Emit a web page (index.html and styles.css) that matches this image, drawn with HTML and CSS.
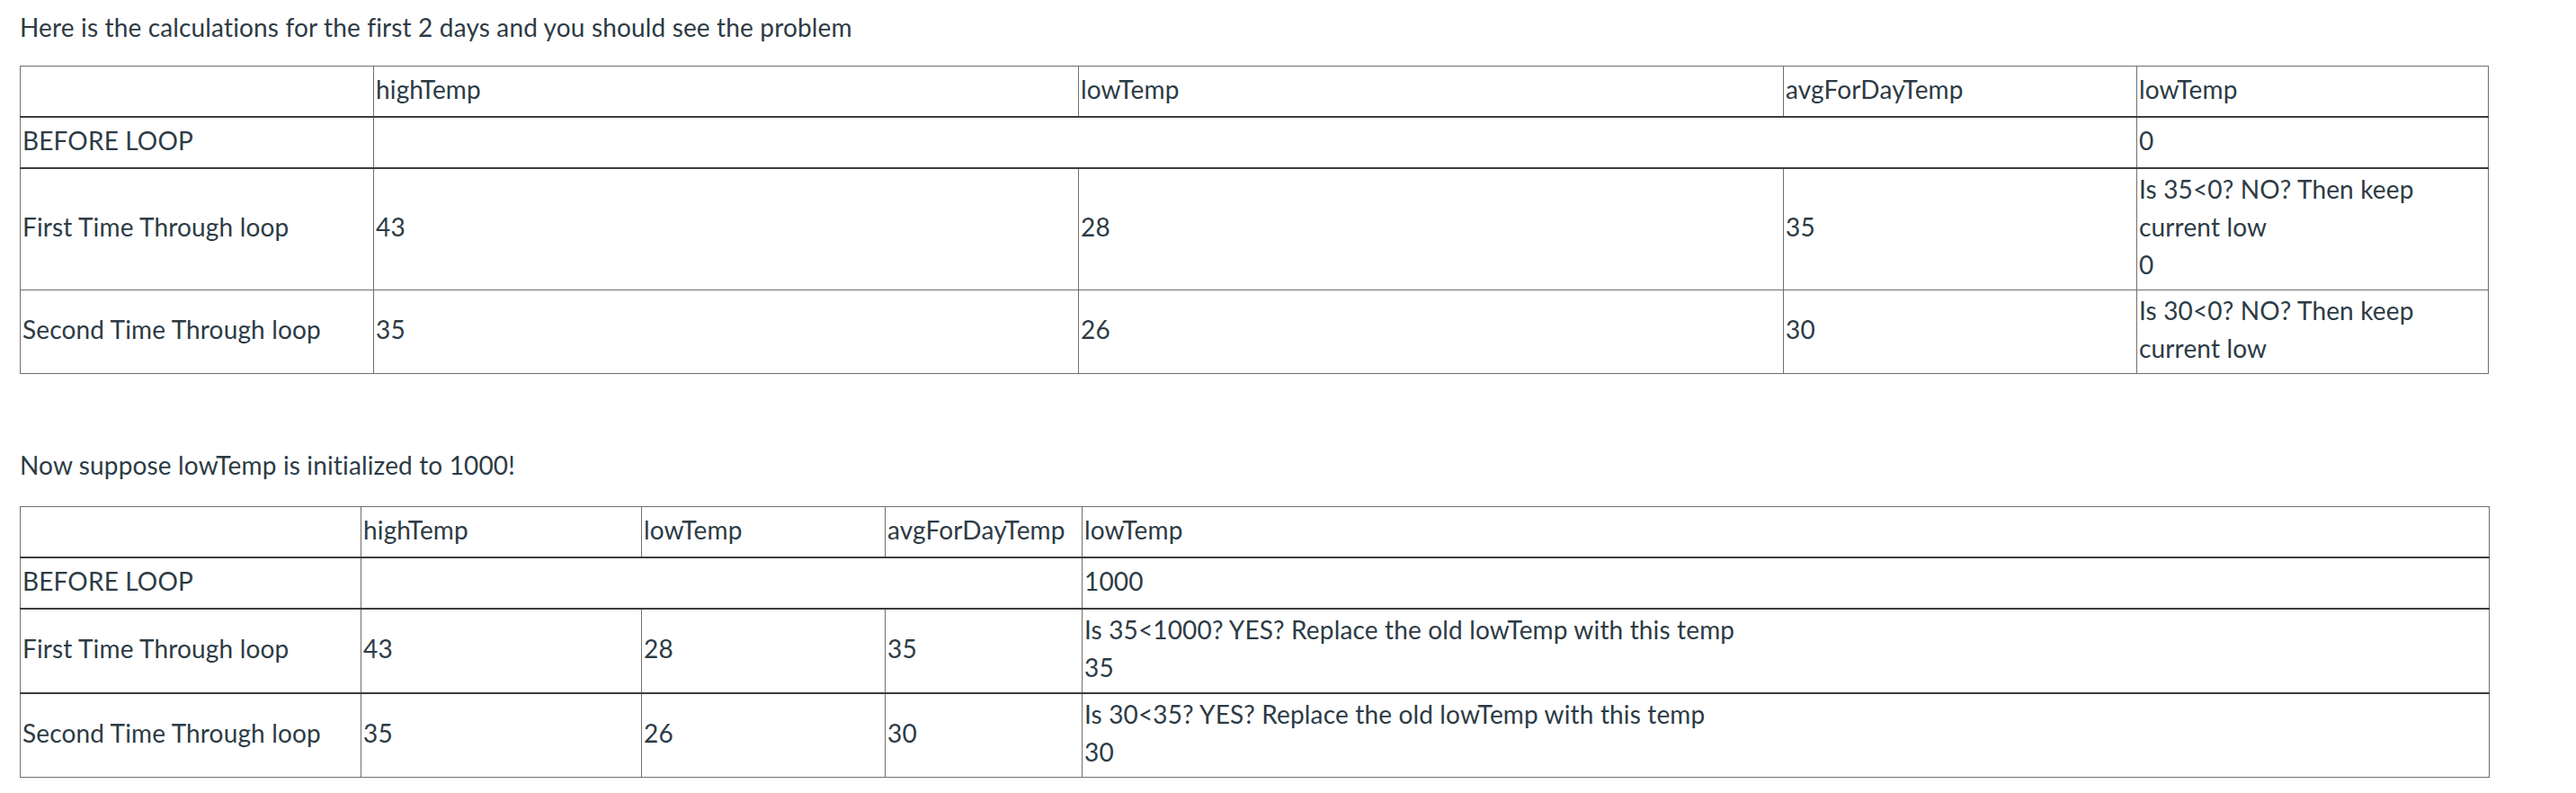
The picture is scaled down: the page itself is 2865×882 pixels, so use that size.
FILE: index.html
```html
<!DOCTYPE html>
<html lang="en">
<head>
    <meta charset="UTF-8">
    <title>lowTemp walkthrough</title>
    <link rel="stylesheet" href="styles.css">
</head>
<body>
<div class="page">
    <p class="intro">Here is the calculations for the first 2 days and you should see the problem</p>

    <table class="trace">
        <colgroup>
            <col class="w-label">
            <col class="w-wide">
            <col class="w-wide">
            <col class="w-avg">
            <col class="w-low">
        </colgroup>
        <tr class="short heavy">
            <td></td>
            <td>highTemp</td>
            <td>lowTemp</td>
            <td>avgForDayTemp</td>
            <td>lowTemp</td>
        </tr>
        <tr class="short heavy">
            <td>BEFORE LOOP</td>
            <td colspan="3"></td>
            <td>0</td>
        </tr>
        <tr>
            <td>First Time Through loop</td>
            <td>43</td>
            <td>28</td>
            <td>35</td>
            <td class="note">Is 35&lt;0? NO? Then keep current low<br>0</td>
        </tr>
        <tr>
            <td>Second Time Through loop</td>
            <td>35</td>
            <td>26</td>
            <td>30</td>
            <td class="note">Is 30&lt;0? NO? Then keep current low</td>
        </tr>
    </table>

    <p class="intro second">Now suppose lowTemp is initialized to 1000!</p>

    <table class="trace">
        <colgroup>
            <col class="w2-label">
            <col class="w2-high">
            <col class="w2-low">
            <col class="w2-avg">
            <col class="w2-rest">
        </colgroup>
        <tr class="short heavy">
            <td></td>
            <td>highTemp</td>
            <td>lowTemp</td>
            <td>avgForDayTemp</td>
            <td>lowTemp</td>
        </tr>
        <tr class="short heavy">
            <td>BEFORE LOOP</td>
            <td colspan="3"></td>
            <td>1000</td>
        </tr>
        <tr class="heavy">
            <td>First Time Through loop</td>
            <td>43</td>
            <td>28</td>
            <td>35</td>
            <td class="note">Is 35&lt;1000? YES? Replace the old lowTemp with this temp<br>35</td>
        </tr>
        <tr>
            <td>Second Time Through loop</td>
            <td>35</td>
            <td>26</td>
            <td>30</td>
            <td class="note">Is 30&lt;35? YES? Replace the old lowTemp with this temp<br>30</td>
        </tr>
    </table>
</div>
</body>
</html>
```

FILE: styles.css
```css
body {
    margin: 0;
    background-color: #ffffff;
    font-family: 'Lato', 'Noto Sans', sans-serif;
    font-size: 28px;
    line-height: 42px;
    letter-spacing: 0.15px;
    color: #2d3b45;
}
.page {
    padding: 9px 97px 0 22px;
}
.intro {
    margin: 0 0 22px 0;
}
.intro.second {
    margin-top: 80px;
    margin-bottom: 25px;
}
.trace {
    width: 2746px;
    table-layout: fixed;
    border-collapse: collapse;
    border: 1px solid #737373;
}
.trace td {
    border: 1px solid #6f6f6f;
    padding: 1px 2px 7px 2px;
    vertical-align: middle;
}
.trace tr.heavy td {
    border-bottom: 2px solid #3c3c3c;
}
.trace tr.short td {
    height: 47px;
}
.trace td.note {
    vertical-align: top;
}
.w-label { width: 393px; }
.w-wide { width: 784px; }
.w-avg { width: 393px; }
.w-low { width: 391px; }
.w2-label { width: 379px; }
.w2-high { width: 312px; }
.w2-low { width: 271px; }
.w2-avg { width: 219px; }
.w2-rest { width: 1565px; }
```
